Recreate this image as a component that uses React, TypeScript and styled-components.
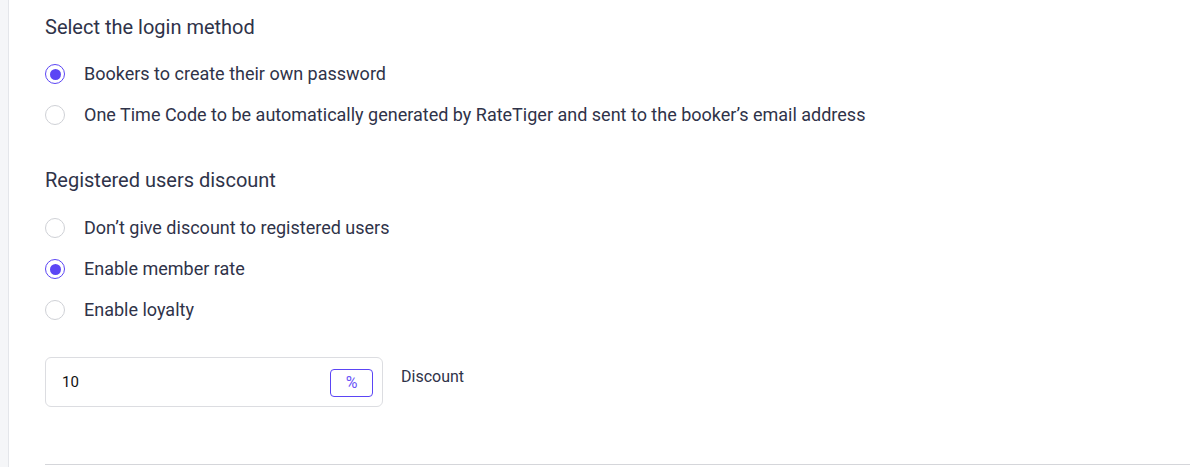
import React, { useState } from 'react';
import styled, { createGlobalStyle } from 'styled-components';

const GlobalStyle = createGlobalStyle`
  body {
    margin: 0;
    background: #ffffff;
    font-family: Roboto, "Liberation Sans", Arial, sans-serif;
    color: #2f3349;
  }
`;

const Page = styled.div`
  display: flex;
  width: 1190px;
  height: 467px;
  overflow: hidden;
`;

const SideStrip = styled.div`
  width: 8px;
  flex-shrink: 0;
  background: #f5f6f8;
  border-right: 1px solid #e4e6ea;
`;

const Content = styled.div`
  flex: 1;
  padding: 15px 0 0 36px;
  display: flex;
  flex-direction: column;
`;

const SectionTitle = styled.h3`
  margin: 0;
  font-size: 20px;
  font-weight: 400;
  line-height: 24px;
  color: #2f3349;
`;

const RadioList = styled.div<{ $top: number }>`
  display: flex;
  flex-direction: column;
  gap: 21px;
  margin-top: ${(p) => p.$top}px;
`;

const RadioRow = styled.label`
  display: flex;
  align-items: center;
  gap: 19px;
  font-size: 18px;
  line-height: 20px;
  cursor: pointer;
  color: #2f3349;
`;

const RadioCircle = styled.span<{ $checked: boolean }>`
  width: 20px;
  height: 20px;
  box-sizing: border-box;
  border-radius: 50%;
  border: ${(p) => (p.$checked ? '1.5px solid #5b45f5' : '1px solid #cfd1d6')};
  display: flex;
  align-items: center;
  justify-content: center;
  flex-shrink: 0;

  &::after {
    content: '';
    width: 11px;
    height: 11px;
    border-radius: 50%;
    background: ${(p) => (p.$checked ? '#5b45f5' : 'transparent')};
  }
`;

const Section = styled.div<{ $top?: number }>`
  margin-top: ${(p) => p.$top ?? 0}px;
`;

const DiscountRow = styled.div`
  display: flex;
  align-items: flex-start;
  gap: 18px;
  margin-top: 37px;
`;

const InputBox = styled.div`
  width: 338px;
  height: 50px;
  box-sizing: border-box;
  border: 1px solid #dcdde1;
  border-radius: 6px;
  display: flex;
  align-items: center;
  justify-content: space-between;
  padding: 0 9px 0 16px;
`;

const ValueInput = styled.input`
  border: none;
  outline: none;
  font-family: Roboto, "Liberation Sans", Arial, sans-serif;
  font-size: 15px;
  color: #111111;
  width: 200px;
  padding: 0;
`;

const UnitButton = styled.button`
  width: 43px;
  height: 28px;
  box-sizing: border-box;
  border: 1px solid #5b45f5;
  border-radius: 4px;
  background: #ffffff;
  color: #6a55f7;
  font-family: Roboto, "Liberation Sans", Arial, sans-serif;
  font-size: 16px;
  padding: 0;
  margin-top: 1px;
`;

const DiscountLabel = styled.span`
  font-size: 16px;
  line-height: 20px;
  margin-top: 10px;
  color: #2f3349;
`;

const Divider = styled.div`
  margin-top: 57px;
  height: 1px;
  background: #d5d6da;
`;

const loginOptions = [
  'Bookers to create their own password',
  'One Time Code to be automatically generated by RateTiger and sent to the booker\u2019s email address',
];

const discountOptions = [
  'Don\u2019t give discount to registered users',
  'Enable member rate',
  'Enable loyalty',
];

export default function App() {
  const [login, setLogin] = useState<number>(0);
  const [discount, setDiscount] = useState<number>(1);
  const [value, setValue] = useState<string>('10');

  return (
    <Page>
      <GlobalStyle />
      <SideStrip />
      <Content>
        <Section>
          <SectionTitle>Select the login method</SectionTitle>
          <RadioList $top={25}>
            {loginOptions.map((opt, i) => (
              <RadioRow key={opt} onClick={() => setLogin(i)}>
                <RadioCircle $checked={login === i} />
                {opt}
              </RadioRow>
            ))}
          </RadioList>
        </Section>
        <Section $top={43}>
          <SectionTitle>Registered users discount</SectionTitle>
          <RadioList $top={26}>
            {discountOptions.map((opt, i) => (
              <RadioRow key={opt} onClick={() => setDiscount(i)}>
                <RadioCircle $checked={discount === i} />
                {opt}
              </RadioRow>
            ))}
          </RadioList>
        </Section>
        <DiscountRow>
          <InputBox>
            <ValueInput value={value} onChange={(e) => setValue(e.target.value)} />
            <UnitButton type="button">%</UnitButton>
          </InputBox>
          <DiscountLabel>Discount</DiscountLabel>
        </DiscountRow>
        <Divider />
      </Content>
    </Page>
  );
}
